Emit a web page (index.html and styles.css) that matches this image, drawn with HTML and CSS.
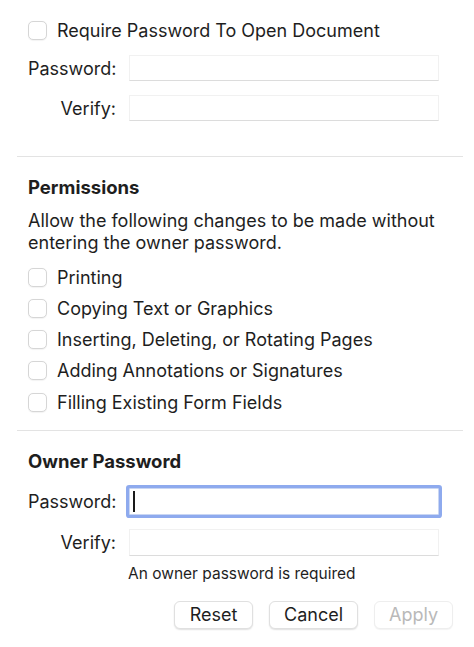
FILE: index.html
```html
<!DOCTYPE html>
<html lang="en">
<head>
<meta charset="utf-8">
<title>Security</title>
<link rel="stylesheet" href="styles.css">
</head>
<body>
<div class="panel">
  <section class="sec sec-open">
    <label class="check-row"><span class="box"></span><span class="check-text">Require Password To Open Document</span></label>
    <div class="field-grid">
      <span class="lbl">Password:</span><span class="field"></span>
      <span class="lbl">Verify:</span><span class="field"></span>
    </div>
  </section>
  <div class="sep"></div>
  <section class="sec sec-perm">
    <h2 class="heading">Permissions</h2>
    <p class="desc">Allow the following changes to be made without entering the owner password.</p>
    <div class="check-list">
      <label class="check-row"><span class="box"></span><span class="check-text">Printing</span></label>
      <label class="check-row"><span class="box"></span><span class="check-text">Copying Text or Graphics</span></label>
      <label class="check-row"><span class="box"></span><span class="check-text">Inserting, Deleting, or Rotating Pages</span></label>
      <label class="check-row"><span class="box"></span><span class="check-text">Adding Annotations or Signatures</span></label>
      <label class="check-row"><span class="box"></span><span class="check-text">Filling Existing Form Fields</span></label>
    </div>
  </section>
  <div class="sep sep-2"></div>
  <section class="sec sec-owner">
    <h2 class="heading">Owner Password</h2>
    <div class="field-grid owner-grid">
      <span class="lbl">Password:</span><span class="field focused"><span class="caret"></span></span>
      <span class="lbl">Verify:</span><span class="field"></span>
    </div>
    <p class="note">An owner password is required</p>
    <div class="buttons">
      <button class="btn">Reset</button>
      <button class="btn btn-wide">Cancel</button>
      <button class="btn btn-disabled" disabled>Apply</button>
    </div>
  </section>
</div>
</body>
</html>
```
FILE: styles.css
```css
* { box-sizing: border-box; }
html, body { margin: 0; padding: 0; background: #ffffff; }
body {
  font-family: "Inter", "Liberation Sans", sans-serif;
  font-size: 18px;
  color: #1e1e1e;
  width: 474px;
  height: 647px;
  overflow: hidden;
}
.panel { padding: 0 11px 0 17px; }
.sec { padding-left: 11px; display: flex; flex-direction: column; }
.sec-open { padding-top: 21px; }

.check-row { display: flex; align-items: center; height: 19px; gap: 10px; }
.box {
  width: 19px; height: 19px; flex: none;
  border: 1px solid #d6d6d6;
  border-radius: 5px;
  background: #fff;
  box-shadow: 0 0.5px 1px rgba(0,0,0,0.05);
}
.check-text { line-height: 19px; white-space: nowrap; }

.field-grid {
  display: grid;
  grid-template-columns: 88px 310px;
  column-gap: 13px;
  row-gap: 14px;
  align-items: center;
  margin-top: 15px;
}
.lbl { text-align: right; white-space: nowrap; }
.field {
  display: block;
  height: 26px;
  background: #fff;
  border: 1px solid #f1f1f1;
  border-bottom-color: #dcdcdc;
  position: relative;
}
.sep { height: 1px; background: #e3e3e3; margin-top: 35px; }

.heading { margin: 20px 0 0; font-size: 18.5px; font-weight: 700; line-height: 20px; }
.desc { margin: 13px 0 0; line-height: 22px; }
.check-list { display: flex; flex-direction: column; gap: 12.3px; margin-top: 13.5px; }
.sep-2 { margin-top: 18px; }

.owner-grid { margin-top: 17px; }
.owner-grid .field { height: 27px; }
.field.focused {
  border: 1px solid #c9d6f3;
  box-shadow: 0 0 0 3px #8eaaee;
  border-radius: 1px;
}
.caret {
  position: absolute;
  left: 3px; top: 2px;
  width: 2px; height: 21px;
  background: #1a1a1a;
}
.note { margin: 8px 0 0 100px; font-size: 15.5px; line-height: 20px; }

.buttons { display: flex; justify-content: flex-end; gap: 16px; margin-top: 17px; padding-right: 10px; }
.btn {
  font-family: inherit;
  font-size: 18px;
  color: #1e1e1e;
  width: 79px; height: 28px;
  padding: 0;
  background: #fff;
  border: 1px solid #e0e0e0;
  border-radius: 6px;
  box-shadow: 0 1px 1.5px rgba(0,0,0,0.12);
}
.btn-wide { width: 89px; }
.btn-disabled { color: #b9b9b9; border-color: #eeeeee; box-shadow: 0 1px 1px rgba(0,0,0,0.05); }
```
